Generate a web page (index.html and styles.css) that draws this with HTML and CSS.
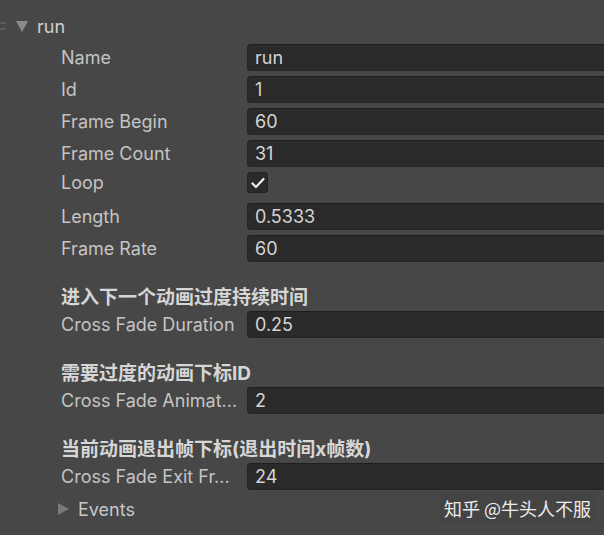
FILE: index.html
```html
<!DOCTYPE html>
<html lang="zh">
<head>
<meta charset="UTF-8" />
<title>Animation Clip Inspector</title>
<link rel="stylesheet" href="styles.css">
</head>
<body>
  <div class="inspector">
    <div class="clip-head">
      <span class="handle"></span>
      <span class="fold open"></span>
      <span class="clip-name">run</span>
    </div>

    <div class="props">
      <div class="row"><span class="label">Name</span><div class="field">run</div></div>
      <div class="row"><span class="label">Id</span><div class="field">1</div></div>
      <div class="row"><span class="label">Frame Begin</span><div class="field">60</div></div>
      <div class="row"><span class="label">Frame Count</span><div class="field">31</div></div>
      <div class="row row-check">
        <span class="label">Loop</span>
        <div class="checkbox">
          <svg width="14" height="12" viewBox="0 0 14 12"><path d="M1.5 6.5 L5 10 L12.5 2" fill="none" stroke="#f0f0f0" stroke-width="2.2" stroke-linecap="round" stroke-linejoin="round"/></svg>
        </div>
      </div>
      <div class="row"><span class="label">Length</span><div class="field">0.5333</div></div>
      <div class="row"><span class="label">Frame Rate</span><div class="field">60</div></div>

      <div class="section-title">进入下一个动画过度持续时间</div>
      <div class="row"><span class="label">Cross Fade Duration</span><div class="field">0.25</div></div>

      <div class="section-title">需要过度的动画下标ID</div>
      <div class="row"><span class="label">Cross Fade Animat...</span><div class="field">2</div></div>

      <div class="section-title">当前动画退出帧下标(退出时间x帧数)</div>
      <div class="row"><span class="label">Cross Fade Exit Fr...</span><div class="field">24</div></div>

      <div class="events">
        <span class="fold closed"></span>
        <span>Events</span>
      </div>
    </div>
  </div>

  <div class="watermark">知乎 @牛头人不服</div>
</body>
</html>
```

FILE: styles.css
```css
* {
  box-sizing: border-box;
}
body {
  margin: 0;
  height: 100vh;
  overflow: hidden;
  background: #474747;
  color: #c8c8c8;
  font-family: Inter, "Noto Sans CJK SC", sans-serif;
  font-size: 18px;
  position: relative;
}
.inspector {
  padding-top: 13px;
}
.clip-head {
  display: flex;
  align-items: center;
  height: 26px;
}
.handle {
  width: 6px;
  height: 8px;
  border-top: 2px solid #5c5c5c;
  border-bottom: 2px solid #5c5c5c;
  margin-right: 10px;
}
.fold.open {
  width: 0;
  height: 0;
  border-left: 6px solid transparent;
  border-right: 6px solid transparent;
  border-top: 11px solid #8a8a8a;
  margin-right: 9px;
}
.clip-name {
  color: #d0d0d0;
}
.props {
  padding-left: 61px;
  padding-top: 5px;
}
.row {
  display: flex;
  align-items: center;
  height: 27px;
  margin-bottom: 5px;
}
.label {
  width: 186px;
  flex-shrink: 0;
  white-space: nowrap;
  color: #c4c4c4;
}
.field {
  flex: 1;
  height: 27px;
  margin-right: -20px;
  background: #2a2a2a;
  border: 1px solid #242424;
  border-top-color: #1e1e1e;
  border-radius: 4px;
  padding-left: 7px;
  line-height: 25px;
  color: #d4d4d4;
}
.row-check {
  height: 26px;
  align-items: flex-start;
  margin-bottom: 5px;
}
.row-check .label {
  line-height: 22px;
}
.checkbox {
  width: 21px;
  height: 21px;
  background: #2a2a2a;
  border: 1px solid #222;
  border-radius: 3px;
  display: flex;
  align-items: center;
  justify-content: center;
}
.section-title {
  height: 26px;
  line-height: 26px;
  margin-top: 23px;
  font-size: 19px;
  font-weight: bold;
  color: #d6d6d6;
}
.events {
  display: flex;
  align-items: center;
  height: 28px;
  margin-top: 1px;
}
.fold.closed {
  width: 0;
  height: 0;
  border-top: 6px solid transparent;
  border-bottom: 6px solid transparent;
  border-left: 11px solid #7a7a7a;
  margin-left: -3px;
  margin-right: 9px;
}
.watermark {
  position: absolute;
  left: 440px;
  top: 493px;
  padding: 2px 4px;
  color: #ececec;
  font-family: "Noto Sans CJK SC", sans-serif;
  font-size: 18px;
  background: rgba(0, 0, 0, 0.04);
}
```
